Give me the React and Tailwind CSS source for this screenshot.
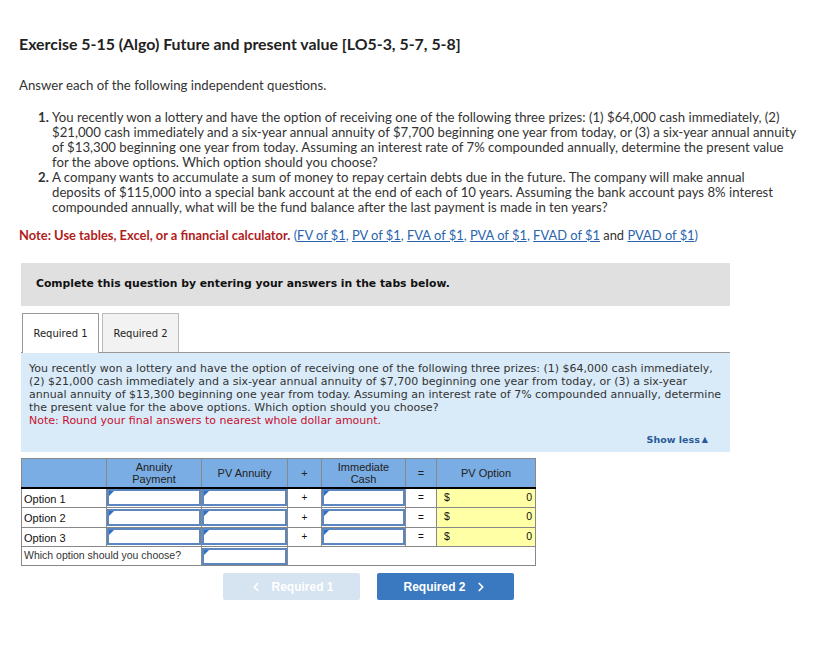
import React from 'react';
import { ChevronLeft, ChevronRight } from 'lucide-react';

const body = { fontFamily: 'Lato, "Open Sans", sans-serif' };
const verd = { fontFamily: '"DejaVu Sans", Verdana, sans-serif' };
const arial = { fontFamily: '"Liberation Sans", Arial, sans-serif' };

const Field = ({ w = 'w-full' }) => (
    <div className={`relative h-[17px] ${w} border-2 border-[#5b86c0] bg-white`}>
        <span className="absolute left-0 top-0 w-0 h-0 border-t-[5px] border-r-[5px] border-t-[#2f6fc4] border-r-transparent" />
    </div>
);

const links = ['FV of $1', 'PV of $1', 'FVA of $1', 'PVA of $1', 'FVAD of $1'];

export default function App() {
    const rows = ['Option 1', 'Option 2', 'Option 3'];

    return (
        <div className="w-[822px] h-[666px] bg-white text-[#222]">
            <div className="pl-[19px] pr-[20px] pt-[35px]" style={body}>
                <h1 className="text-[15.9px] font-bold text-[#222] leading-[18px]">
                    Exercise 5-15 (Algo) Future and present value [LO5-3, 5-7, 5-8]
                </h1>
                <p className="mt-[25px] text-[13.2px] leading-[15px] text-[#333]">
                    Answer each of the following independent questions.
                </p>
                <ol className="mt-[17px] ml-[19px] text-[13.2px] leading-[15px] text-[#333]">
                    <li className="flex">
                        <span className="w-[14px] shrink-0 font-bold">1.</span>
                        <span>You recently won a lottery and have the option of receiving one of the following three prizes: (1) $64,000 cash immediately, (2) $21,000 cash immediately and a six-year annual annuity of $7,700 beginning one year from today, or (3) a six-year annual annuity of $13,300 beginning one year from today. Assuming an interest rate of 7% compounded annually, determine the present value for the above options. Which option should you choose?</span>
                    </li>
                    <li className="flex">
                        <span className="w-[14px] shrink-0 font-bold">2.</span>
                        <span>A company wants to accumulate a sum of money to repay certain debts due in the future. The company will make annual<br />deposits of $115,000 into a special bank account at the end of each of 10 years. Assuming the bank account pays 8% interest compounded annually, what will be the fund balance after the last payment is made in ten years?</span>
                    </li>
                </ol>
                <p className="mt-[13px] text-[12.9px] leading-[15px]">
                    <span className="font-bold text-[#b01c1c]">Note: Use tables, Excel, or a financial calculator.</span>{' '}
                    <span className="text-[#2a64b0]">(</span>
                    {links.map((l, i) => (
                        <React.Fragment key={l}>
                            <span className="text-[#2a64b0] underline">{l}</span>
                            {i < links.length - 1 && <span className="text-[#2a64b0]">, </span>}
                        </React.Fragment>
                    ))}
                    <span className="text-[#333]"> and </span>
                    <span className="text-[#2a64b0] underline">PVAD of $1</span>
                    <span className="text-[#2a64b0]">)</span>
                </p>
            </div>

            <div className="ml-[21px] w-[709px]" style={verd}>
                <div className="mt-[20px] h-[43px] bg-[#e0e0e0] flex items-center pl-[15px] text-[10.8px] font-bold text-[#111]">
                    Complete this question by entering your answers in the tabs below.
                </div>

                <div className="mt-[7px] flex items-end gap-[3px] pl-px border-b border-[#999]">
                    <div className="h-[40px] w-[77px] flex items-center justify-center bg-white border border-[#999] border-b-0 -mb-px text-[10px] text-[#222]">
                        Required 1
                    </div>
                    <div className="h-[39px] w-[77px] flex items-center justify-center bg-[#f2f2f2] border border-[#bbb] border-b-0 text-[10px] text-[#222]">
                        Required 2
                    </div>
                </div>

                <div className="bg-[#d9ebf9] px-[8px] pt-[9px] pb-[6px] text-[11px] leading-[13px] text-[#333]">
                    <p>
                        You recently won a lottery and have the option of receiving one of the following three prizes: (1) $64,000 cash immediately, (2) $21,000 cash immediately and a six-year annual annuity of $7,700 beginning one year from today, or (3) a six-year annual annuity of $13,300 beginning one year from today. Assuming an interest rate of 7% compounded annually, determine the present value for the above options. Which option should you choose?
                    </p>
                    <p className="text-[#c8102e]">Note: Round your final answers to nearest whole dollar amount.</p>
                    <div className="mt-[6px] flex justify-end pr-[14px] text-[9.5px] font-bold text-[#2a5a96]">
                        Show less <span className="ml-[2px] text-[8px]">▲</span>
                    </div>
                </div>

                <table className="mt-[6px] border-collapse text-[11px] text-[#111]" style={arial}>
                    <thead>
                        <tr className="bg-[#7aade3] h-[29px] text-[#222]">
                            <th className="w-[85px] border border-[#888] border-b-2 border-b-black" />
                            <th className="w-[95px] border border-[#888] border-b-2 border-b-black font-normal leading-[12px]">Annuity<br />Payment</th>
                            <th className="w-[86px] border border-[#888] border-b-2 border-b-black font-normal">PV Annuity</th>
                            <th className="w-[34px] border border-[#888] border-b-2 border-b-black font-normal">+</th>
                            <th className="w-[84px] border border-[#888] border-b-2 border-b-black font-normal leading-[12px]">Immediate<br />Cash</th>
                            <th className="w-[31px] border border-[#888] border-b-2 border-b-black font-normal">=</th>
                            <th className="w-[99px] border border-[#888] border-b-2 border-b-black font-normal">PV Option</th>
                        </tr>
                    </thead>
                    <tbody>
                        {rows.map(r => (
                            <tr key={r} className="h-[19px]">
                                <td className="border border-[#888] px-[2px] pt-[2px] text-[11px]">{r}</td>
                                <td className="border border-[#888] p-0"><Field /></td>
                                <td className="border border-[#888] p-0"><Field /></td>
                                <td className="border border-[#888] text-center text-[10px]">+</td>
                                <td className="border border-[#888] p-0"><Field /></td>
                                <td className="border border-[#888] text-center text-[10px]">=</td>
                                <td className="border border-[#888] bg-[#ffffa6] px-[3px]">
                                    <div className="flex justify-between text-[10.5px]"><span className="pl-[4px]">$</span><span>0</span></div>
                                </td>
                            </tr>
                        ))}
                        <tr className="h-[19px]">
                            <td colSpan={2} className="border border-[#888] px-[2px] text-[10.5px] text-[#333]">Which option should you choose?</td>
                            <td className="border border-[#888] p-0"><Field /></td>
                            <td colSpan={4} className="border border-[#888]" />
                        </tr>
                    </tbody>
                </table>

                <div className="mt-[7px] flex gap-[17px] pl-[202px]" style={arial}>
                    <div className="w-[137px] h-[27px] rounded-[2px] bg-[#d6e3f1] text-white text-[12px] font-bold flex items-center justify-center gap-[8px]">
                        <ChevronLeft size={14} strokeWidth={3} /> Required 1
                    </div>
                    <div className="w-[137px] h-[27px] rounded-[2px] bg-[#3a78bf] text-white text-[12px] font-bold flex items-center justify-center gap-[8px]">
                        Required 2 <ChevronRight size={14} strokeWidth={3} />
                    </div>
                </div>
            </div>
        </div>
    );
}
